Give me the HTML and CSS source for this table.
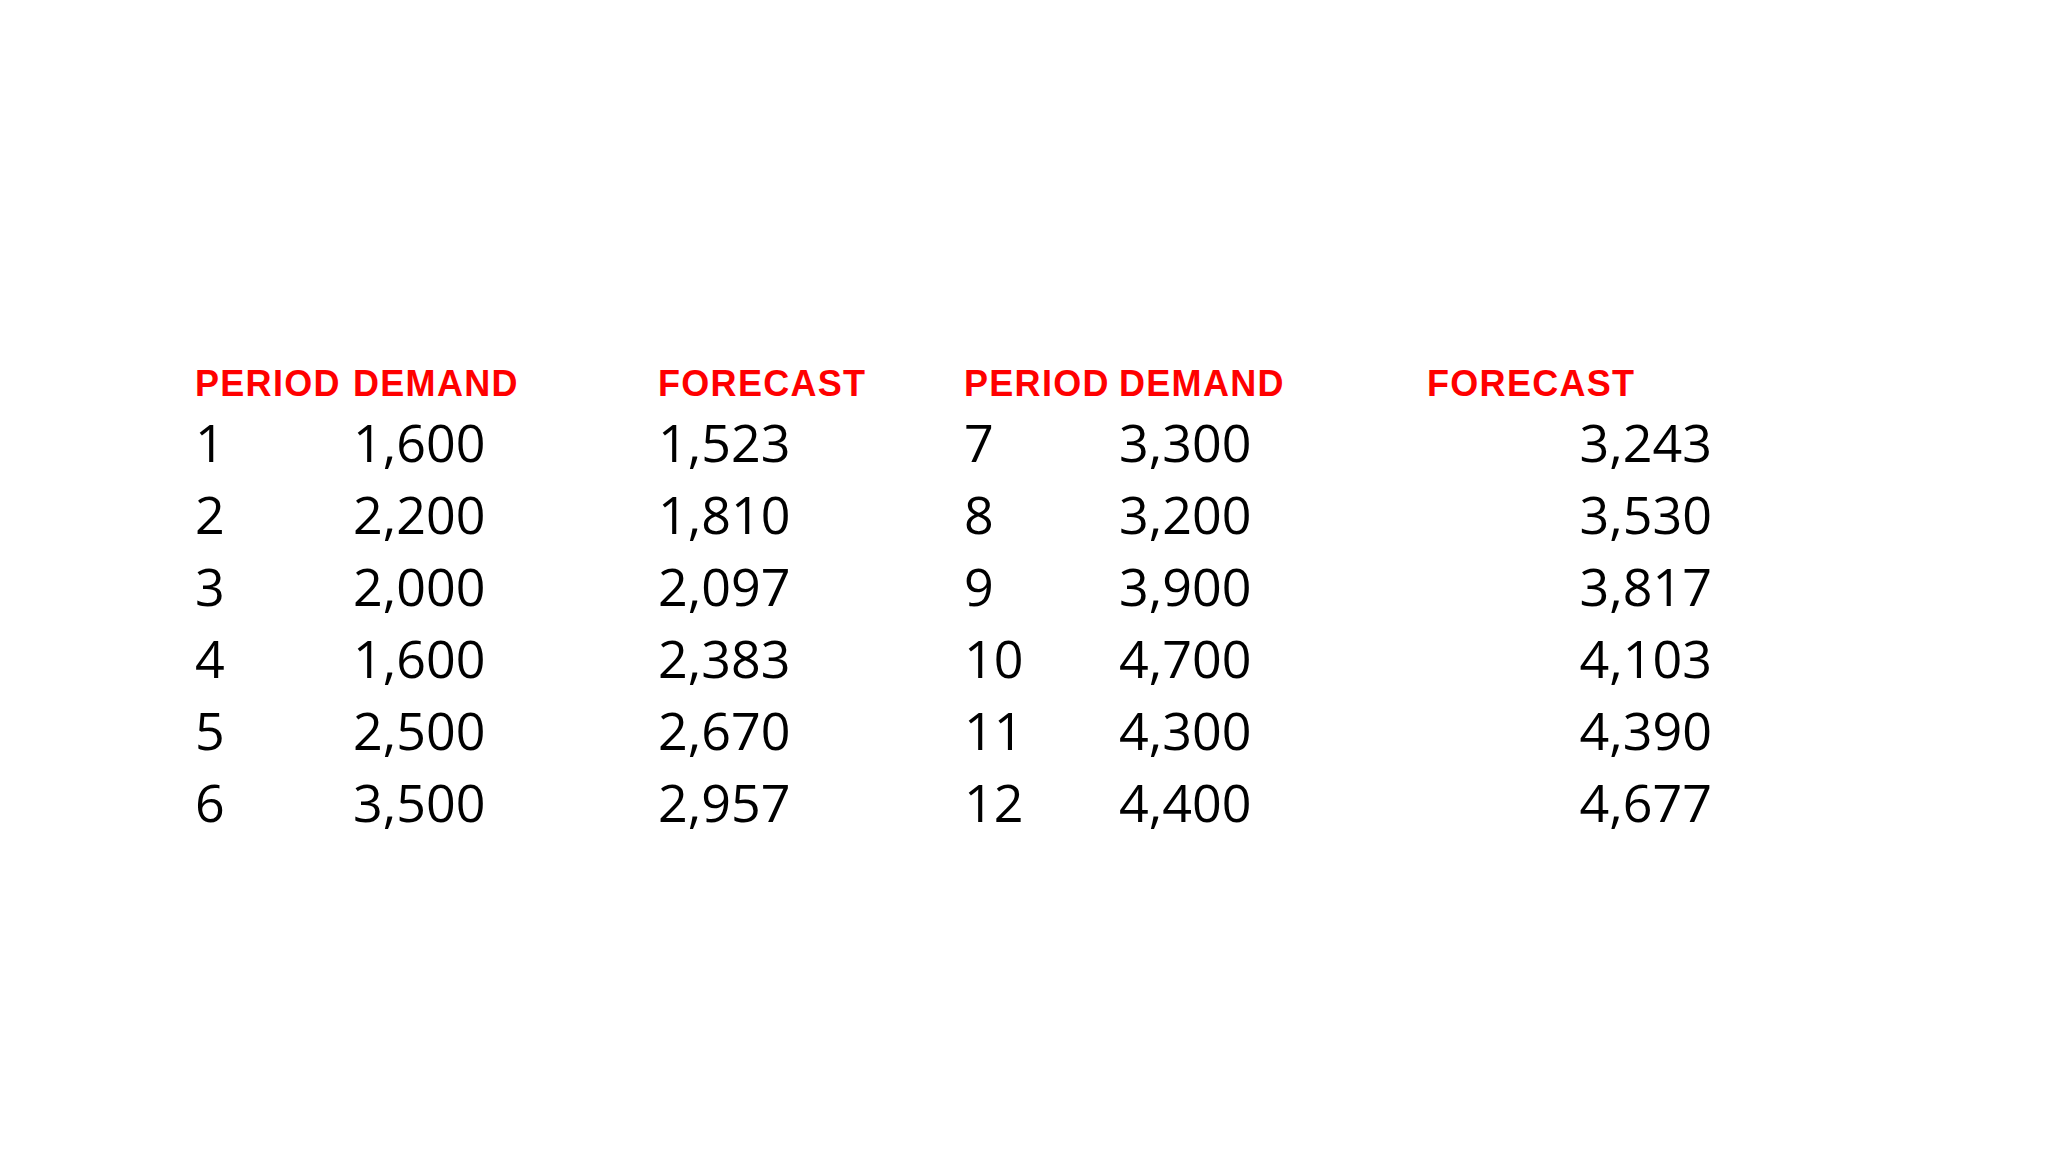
FILE: index.html
```html
<!DOCTYPE html>
<html lang="en">
<head>
<meta charset="utf-8">
<title>Forecast table</title>
<link rel="stylesheet" href="styles.css">
</head>
<body>
<main class="slide">
  <div class="table">
    <div class="hd">PERIOD</div>
    <div class="hd">DEMAND</div>
    <div class="hd">FORECAST</div>
    <div class="hd">PERIOD</div>
    <div class="hd">DEMAND</div>
    <div class="hd">FORECAST</div>

    <div class="cell">1</div><div class="cell">1,600</div><div class="cell">1,523</div>
    <div class="cell">7</div><div class="cell">3,300</div><div class="cell right">3,243</div>

    <div class="cell">2</div><div class="cell">2,200</div><div class="cell">1,810</div>
    <div class="cell">8</div><div class="cell">3,200</div><div class="cell right">3,530</div>

    <div class="cell">3</div><div class="cell">2,000</div><div class="cell">2,097</div>
    <div class="cell">9</div><div class="cell">3,900</div><div class="cell right">3,817</div>

    <div class="cell">4</div><div class="cell">1,600</div><div class="cell">2,383</div>
    <div class="cell">10</div><div class="cell">4,700</div><div class="cell right">4,103</div>

    <div class="cell">5</div><div class="cell">2,500</div><div class="cell">2,670</div>
    <div class="cell">11</div><div class="cell">4,300</div><div class="cell right">4,390</div>

    <div class="cell">6</div><div class="cell">3,500</div><div class="cell">2,957</div>
    <div class="cell">12</div><div class="cell">4,400</div><div class="cell right">4,677</div>
  </div>
</main>
</body>
</html>
```

FILE: styles.css
```css
html, body {
  margin: 0;
  padding: 0;
  background: #ffffff;
}

.slide {
  width: 2048px;
  height: 1152px;
  box-sizing: border-box;
  padding: 366px 0 0 195px;
  background: #ffffff;
}

.table {
  display: grid;
  grid-template-columns: 158px 305px 306px 155px 308px 285px;
  grid-template-rows: 40px repeat(6, 72px);
}

.hd {
  font-family: "Comic Sans MS", "Liberation Sans", Arial, sans-serif;
  font-weight: 700;
  font-size: 36px;
  line-height: 36px;
  letter-spacing: 1.3px;
  color: #ff0000;
  white-space: nowrap;
}

.cell {
  font-family: "Open Sans", "Liberation Sans", sans-serif;
  font-weight: 500;
  font-size: 52px;
  line-height: 72px;
  letter-spacing: 0;
  color: #000000;
  white-space: nowrap;
}

.right {
  text-align: right;
}
```
